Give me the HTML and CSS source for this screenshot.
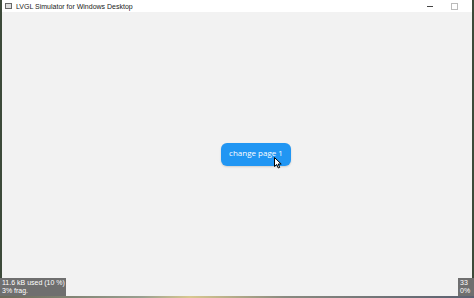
FILE: index.html
```html
<!DOCTYPE html>
<html lang="en">

<head>
    <meta charset="UTF-8">
    <title>LVGL Simulator for Windows Desktop</title>
    <link rel="stylesheet" href="styles.css">
</head>

<body>
    <div class="window">
        <div class="titlebar">
            <span class="app-icon"></span>
            <span class="title">LVGL Simulator for Windows Desktop</span>
            <span class="controls">
                <span class="min"></span>
                <span class="max"></span>
            </span>
        </div>
        <div class="screen">
            <button class="btn">change page 1</button>
            <svg class="cursor" width="8" height="12" viewBox="0 0 8 12">
                <path d="M0.5 0.5 L0.5 9.5 L2.7 7.5 L4.3 11 L5.7 10.4 L4.2 7 L7.2 7 Z" fill="#fff" stroke="#000" stroke-width="1"/>
            </svg>
            <div class="mem">11.6 kB used (10 %)<br>3% frag.</div>
            <div class="perf">33<br>0%</div>
        </div>
    </div>
    <div class="taskbar"></div>
</body>

</html>
```

FILE: styles.css
```css
body {
    margin: 0;
    width: 474px;
    height: 298px;
    overflow: hidden;
    background: #3d4a3a;
    font-family: "Liberation Sans", Arial, sans-serif;
    display: flex;
    flex-direction: column;
}

.window {
    margin-left: 2px;
    width: 470px;
    height: 296px;
    display: flex;
    flex-direction: column;
    background: #fff;
}

.titlebar {
    height: 12px;
    display: flex;
    align-items: center;
    background: #fff;
    font-size: 7px;
    color: #222;
}

.app-icon {
    width: 7px;
    height: 6px;
    margin: 0 4px 0 3px;
    border: 1px solid #666;
    box-sizing: border-box;
    background: #ddd;
}

.title {
    flex: 1;
}

.controls {
    display: flex;
    align-items: center;
    gap: 18px;
    margin-right: 14px;
}

.min {
    width: 6px;
    height: 1px;
    background: #444;
}

.max {
    width: 5px;
    height: 5px;
    border: 1px solid #bbb;
}

.screen {
    flex: 1;
    position: relative;
    background: #f2f2f2;
    display: flex;
    align-items: center;
    justify-content: center;
}

.btn {
    margin-left: 38px;
    width: 70px;
    height: 23px;
    border: none;
    border-radius: 6px;
    background: #2196f3;
    color: #fff;
    font-family: "Open Sans", sans-serif;
    font-size: 8px;
    padding: 0 0 4px;
    box-shadow: 0 1px 2px rgba(0, 0, 0, 0.15);
}

.cursor {
    position: absolute;
    left: 272px;
    top: 145px;
}

.mem {
    position: absolute;
    left: -2px;
    bottom: 0;
    width: 66px;
    height: 18px;
    padding: 1px 0 0 2px;
    box-sizing: border-box;
    background: #6f6f6f;
    color: #fff;
    font-size: 7px;
    line-height: 8px;
}

.perf {
    position: absolute;
    right: -2px;
    bottom: 0;
    width: 16px;
    height: 18px;
    padding: 1px 0 0 2px;
    box-sizing: border-box;
    background: #6f6f6f;
    color: #fff;
    font-size: 7px;
    line-height: 8px;
    overflow: hidden;
}

.taskbar {
    height: 2px;
    background: linear-gradient(90deg, #6a6a5a, #9aa090 30%, #d8c890 40%, #8a8a80 60%, #5a6070);
}
```
